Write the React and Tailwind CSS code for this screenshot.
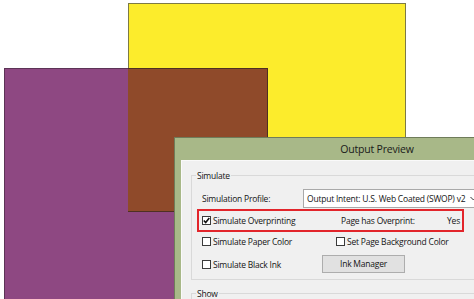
import React from "react";

const Check = ({ checked }) => (
  <span className="flex h-[9px] w-[9px] shrink-0 items-center justify-center border border-[#3a3a3a] bg-white">
    {checked && (
      <svg width="7" height="7" viewBox="0 0 7 7">
        <path d="M0.8 3.5 L2.7 5.5 L6.3 1.1" stroke="#111" strokeWidth="1.6" fill="none" />
      </svg>
    )}
  </span>
);

const CheckLabel = ({ checked, children, className = "" }) => (
  <div className={"flex items-center gap-[2px] " + className}>
    <Check checked={checked} />
    <span className="whitespace-nowrap">{children}</span>
  </div>
);

export default function App() {
  return (
    <div
      className="relative h-[299px] w-[474px] overflow-hidden bg-white text-[#141414]"
      style={{ fontFamily: '"Open Sans", "Noto Sans", sans-serif' }}
    >
      {/* canvas shapes */}
      <div className="absolute left-[128px] top-[3px] h-[209px] w-[278px] border border-[#7d7a45] bg-[#fcec2c]" />
      <div className="absolute left-[4px] top-[68px] h-[260px] w-[264px] border border-[#5c3456] bg-[#8e4882]" />
      <div className="absolute left-[128px] top-[68px] h-[144px] w-[140px] border-t border-r border-b border-[#4e3022] bg-[#8f4a2a]" />

      {/* dialog window */}
      <div className="absolute left-[174px] top-[137px] h-[200px] w-[406px] border border-[#6f7c5a] bg-[#a8b888]">
        <div className="flex h-[22px] items-center justify-center text-[10.5px] leading-none tracking-[-0.2px] text-[#1a1a1a]">
          Output Preview
        </div>
        <div className="ml-[6px] h-[200px] border-l border-t border-[#fafafa] bg-[#f0f0f0] text-[8.5px] leading-[11px] tracking-[-0.22px]">
          {/* Simulate group */}
          <div className="relative ml-[9px] mt-[14px] w-[320px] border-b border-l border-t border-[#d9d9d9]">
            <span className="absolute -top-[6px] left-[4px] bg-[#f0f0f0] px-[1px] leading-[11px]">Simulate</span>

            <div className="mt-[13px] flex h-[19px] items-center pl-[10px]">
              <span className="w-[101px] whitespace-nowrap">Simulation Profile:</span>
              <div className="flex h-[19px] flex-1 items-center border border-[#a9a9a9] bg-white pl-[3px]">
                <span className="whitespace-nowrap">Output Intent: U.S. Web Coated (SWOP) v2</span>
                <svg className="ml-[5px] shrink-0" width="7" height="5" viewBox="0 0 7 5">
                  <path d="M0.5 1 L3.5 4 L6.5 1" stroke="#333" strokeWidth="1" fill="none" />
                </svg>
              </div>
            </div>

            <div className="ml-[5px] mt-[1px] flex h-[23px] w-[267px] items-center border-2 border-[#e2252b] pl-[3px]">
              <CheckLabel checked className="w-[139px]">Simulate Overprinting</CheckLabel>
              <span className="whitespace-nowrap">Page has Overprint:</span>
              <span className="ml-auto pr-[2px]">Yes</span>
            </div>

            <div className="flex h-[18px] items-center pl-[10px]">
              <CheckLabel className="w-[134px]">Simulate Paper Color</CheckLabel>
              <CheckLabel>Set Page Background Color</CheckLabel>
            </div>

            <div className="mt-[5px] flex h-[18px] items-center pl-[10px]">
              <CheckLabel className="w-[120px]">Simulate Black Ink</CheckLabel>
              <button className="flex h-[18px] w-[83px] items-center justify-center border border-[#adadad] bg-[#e1e1e1] text-[8.5px] leading-none tracking-[-0.22px]">
                Ink Manager
              </button>
            </div>
            <div className="h-[6px]" />
          </div>

          {/* Show group */}
          <div className="relative ml-[9px] mt-[13px] h-[40px] w-[320px] border-l border-t border-[#d9d9d9]">
            <span className="absolute -top-[6px] left-[4px] bg-[#f0f0f0] px-[1px] leading-[11px]">Show</span>
          </div>
        </div>
      </div>
    </div>
  );
}
